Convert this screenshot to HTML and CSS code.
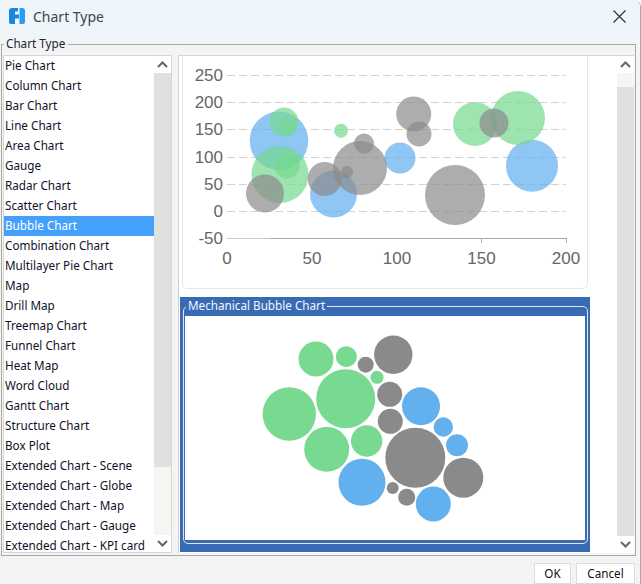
FILE: index.html
```html
<!DOCTYPE html>
<html lang="en">
<head>
<meta charset="utf-8">
<title>Chart Type</title>
<link rel="stylesheet" href="styles.css">
</head>
<body>
<div class="window">
  <header class="titlebar">
    <svg class="app-icon" width="16" height="16" viewBox="0 0 16 16">
      <path fill="#1a86e0" d="M3 0h6v3.500H6V16H2a2 2 0 0 1-2-2V3a3 3 0 0 1 3-3z"/>
      <path fill="#1a86e0" d="M6 6.500h4v4H6z"/>
      <path fill="#2a9df0" d="M10.500 0H13a3 3 0 0 1 3 3v11a2 2 0 0 1-2 2h-3.500V0z"/>
    </svg>
    <span class="title">Chart Type</span>
    <svg class="close" width="13" height="13" viewBox="0 0 13 13"><path d="M.5.5l12 12M12.500.5l-12 12" stroke="#333" stroke-width="1.200" fill="none"/></svg>
  </header>
  <fieldset class="group">
    <legend class="group-label">Chart Type</legend>
    <div class="columns">
      <div class="listbox">
        <ul class="items">
          <li>Pie Chart</li>
          <li>Column Chart</li>
          <li>Bar Chart</li>
          <li>Line Chart</li>
          <li>Area Chart</li>
          <li>Gauge</li>
          <li>Radar Chart</li>
          <li>Scatter Chart</li>
          <li class="selected">Bubble Chart</li>
          <li>Combination Chart</li>
          <li>Multilayer Pie Chart</li>
          <li>Map</li>
          <li>Drill Map</li>
          <li>Treemap Chart</li>
          <li>Funnel Chart</li>
          <li>Heat Map</li>
          <li>Word Cloud</li>
          <li>Gantt Chart</li>
          <li>Structure Chart</li>
          <li>Box Plot</li>
          <li>Extended Chart - Scene</li>
          <li>Extended Chart - Globe</li>
          <li>Extended Chart - Map</li>
          <li>Extended Chart - Gauge</li>
          <li>Extended Chart - KPI card</li>
        </ul>
        <div class="scrollbar list-scroll">
          <div class="arrow"><svg width="11" height="7" viewBox="0 0 11 7"><path d="M1 6l4.500-4.500L10 6" stroke="#666" stroke-width="2" fill="none"/></svg></div>
          <div class="thumb"></div>
          <div class="track"></div>
          <div class="arrow"><svg width="11" height="7" viewBox="0 0 11 7"><path d="M1 1l4.500 4.500L10 1" stroke="#666" stroke-width="2" fill="none"/></svg></div>
        </div>
      </div>
      <div class="preview">
        <div class="gallery">
          <div class="card">
            <svg class="plot" width="404" height="232" viewBox="183 56 404 232">
              <g class="grid">
                <path d="M227 75.500H566M227 102.500H566M227 129.500H566M227 157.500H566M227 184.500H566M227 211.500H566"/>
              </g>
              <path class="axis" d="M270 238.500H566.500M566.500 238V243M481.500 238V243"/>
              <path class="axis-start" d="M227 238.500H270"/>
              <g class="y-labels">
                <text x="223" y="81">250</text>
                <text x="223" y="108">200</text>
                <text x="223" y="135">150</text>
                <text x="223" y="163">100</text>
                <text x="223" y="190">50</text>
                <text x="223" y="217">0</text>
                <text x="223" y="244">-50</text>
              </g>
              <g class="x-labels">
                <text x="227" y="264">0</text>
                <text x="312" y="264">50</text>
                <text x="397" y="264">100</text>
                <text x="481.500" y="264">150</text>
                <text x="566" y="264">200</text>
              </g>
              <g class="soft blue">
                <circle cx="279" cy="140.700" r="29.300"/>
                <circle cx="333.500" cy="194" r="23.500"/>
                <circle cx="400" cy="158" r="15.500"/>
                <circle cx="532" cy="165.700" r="26"/>
              </g>
              <g class="soft green">
                <circle cx="284" cy="122" r="14.500"/>
                <circle cx="289" cy="128" r="7.500"/>
                <circle cx="341" cy="130.700" r="7"/>
                <circle cx="280" cy="174.500" r="28.500"/>
                <circle cx="287" cy="166" r="12.500"/>
                <circle cx="475" cy="124" r="22"/>
                <circle cx="518" cy="118" r="27"/>
              </g>
              <g class="soft gray">
                <circle cx="265" cy="193.500" r="19"/>
                <circle cx="324.700" cy="179" r="17"/>
                <circle cx="360" cy="168" r="27"/>
                <circle cx="364" cy="143.500" r="10"/>
                <circle cx="347" cy="172" r="6"/>
                <circle cx="413.700" cy="114" r="17.500"/>
                <circle cx="419" cy="134" r="12.500"/>
                <circle cx="494" cy="123" r="14.500"/>
                <circle cx="455" cy="195" r="30"/>
              </g>
            </svg>
          </div>
          <div class="selected-tile">
            <fieldset class="tile-frame">
              <legend class="tile-label">Mechanical Bubble Chart</legend>
              <div class="tile-body">
                <svg class="plot" width="400" height="224" viewBox="185 317 400 224">
                  <g class="green-solid">
                    <circle cx="316" cy="360" r="17.500"/>
                    <circle cx="346.300" cy="357.700" r="10.500"/>
                    <circle cx="377" cy="378.300" r="6.500"/>
                    <circle cx="345.700" cy="399.700" r="29.500"/>
                    <circle cx="289.300" cy="415" r="26.700"/>
                    <circle cx="326.700" cy="450.300" r="22.500"/>
                    <circle cx="366.700" cy="442" r="15.700"/>
                  </g>
                  <g class="gray-solid">
                    <circle cx="393.300" cy="355.700" r="19.200"/>
                    <circle cx="365.700" cy="365.700" r="8"/>
                    <circle cx="389.700" cy="395.300" r="12.500"/>
                    <circle cx="390.300" cy="422.300" r="12.500"/>
                    <circle cx="415.300" cy="458.700" r="30"/>
                    <circle cx="463.300" cy="478.700" r="20"/>
                    <circle cx="392.700" cy="489" r="6"/>
                    <circle cx="406.700" cy="498.300" r="8.500"/>
                  </g>
                  <g class="blue-solid">
                    <circle cx="421" cy="407.300" r="19"/>
                    <circle cx="443.300" cy="428" r="9.700"/>
                    <circle cx="457" cy="446.300" r="11"/>
                    <circle cx="362" cy="483.300" r="23.500"/>
                    <circle cx="433.300" cy="505" r="17.500"/>
                  </g>
                </svg>
              </div>
            </fieldset>
          </div>
        </div>
        <div class="scrollbar preview-scroll">
          <div class="arrow"><svg width="11" height="7" viewBox="0 0 11 7"><path d="M1 6l4.500-4.500L10 6" stroke="#666" stroke-width="2" fill="none"/></svg></div>
          <div class="track short"></div>
          <div class="thumb"></div>
          <div class="arrow"><svg width="11" height="7" viewBox="0 0 11 7"><path d="M1 1l4.500 4.500L10 1" stroke="#666" stroke-width="2" fill="none"/></svg></div>
        </div>
      </div>
    </div>
  </fieldset>
  <footer class="actions">
    <button class="btn ok" type="button">OK</button>
    <button class="btn cancel" type="button">Cancel</button>
  </footer>
</div>
</body>
</html>
```

FILE: styles.css
```css
* { box-sizing: border-box; }
html, body { margin: 0; padding: 0; }
body { background: #fff; font-family: "Noto Sans", Tahoma, sans-serif; font-size: 11.7px; color: #111; overflow: hidden; }
.window { width: 641px; height: 584px; display: flex; flex-direction: column; background: #f3f4f6; border-right: 1px solid #a9a9a9; border-top-right-radius: 7px; overflow: hidden; }
.titlebar { height: 35px; flex: none; display: flex; align-items: center; padding: 0 14px 3px 9px; background: #eef5fb; }
.app-icon { flex: none; }
.title { margin-left: 8px; font-size: 14px; color: #444; flex: 1; }
.close { flex: none; }
.group { margin: 2px 4px 0 1px; padding: 0 1px 1px 1px; height: 519px; border: 1px solid #aaa99f; flex: none; min-width: 0; }
.group-label { margin-left: 1px; padding: 0 3px 2px 2px; font-size: 11.7px; line-height: 12px; color: #223; }
.columns { display: flex; height: 498px; margin-top: 4px; }
.listbox { width: 169px; flex: none; display: flex; border: 1px solid #d6d6d2; background: #fff; }
.items { list-style: none; margin: 0; padding: 0; width: 150px; flex: none; overflow: hidden; }
.items li { height: 20px; line-height: 18px; padding-left: 1px; white-space: nowrap; color: #10102a; }
.items li:last-child { height: 16px; }
.items li.selected { background: #45a0fb; color: #fff; }
.scrollbar { width: 17px; display: flex; flex-direction: column; background: #f5f5f1; flex: none; }
.arrow { height: 17px; flex: none; display: flex; align-items: center; justify-content: center; background: #fff; }
.thumb { background: #e0e0de; }
.list-scroll .thumb { height: 394px; flex: none; }
.list-scroll .track { flex: 1; }
.preview { flex: 1; margin-left: 6px; display: flex; border-left: 1px solid #cfcfcf; border-top: 1px solid #d6d6d6; background: #fff; min-width: 0; }
.gallery { width: 438px; flex: none; padding-left: 1px; }
.card { width: 406px; height: 233px; margin-left: 2px; border: 1px solid #e6e6e6; border-top: 0; border-radius: 0 0 5px 5px; overflow: hidden; background: #fff; }
.plot { display: block; }
.grid path { stroke: #d2d2d2; stroke-width: 1; stroke-dasharray: 8 4; fill: none; }
.axis { stroke: #aaa; fill: none; }
.axis-start { stroke: #c8c8c8; fill: none; }
.y-labels text { font-family: "Liberation Sans", Arial, sans-serif; font-size: 17px; fill: #666; text-anchor: end; }
.x-labels text { font-family: "Liberation Sans", Arial, sans-serif; font-size: 17px; fill: #666; text-anchor: middle; }
.soft circle { opacity: .7; }
.blue circle { fill: #5faeef; }
.green circle { fill: #75d98f; }
.gray circle { fill: #8a8a8a; }
.green-solid { fill: #78da90; }
.gray-solid { fill: #8a8a8a; }
.blue-solid { fill: #62b0ee; }
.selected-tile { width: 410px; height: 255px; margin-top: 8px; background: #386bb3; padding: 2px 2px 0 3px; }
.tile-frame { margin: 0; padding: 0 2px 2px 1px; width: 405px; height: 245px; border: 1px solid #dfe7f3; border-radius: 5px; min-width: 0; }
.tile-label { margin-left: 1px; padding: 0 2px 2px; font-size: 11.7px; line-height: 12px; color: #f2f6fd; }
.tile-body { width: 400px; height: 224px; margin-top: 3px; background: #fff; }
.preview-scroll .short { height: 14px; flex: none; }
.preview-scroll .thumb { flex: 1; }
.actions { flex: 1; display: flex; justify-content: flex-end; gap: 5px; padding: 7px 5px 0 0; }
.btn { height: 21px; padding: 0 0 2px; border: 1px solid #dcdcdc; background: #fff; font: 11.7px "Noto Sans", Tahoma, sans-serif; color: #111; }
.ok { width: 37px; }
.cancel { width: 59px; }
```
